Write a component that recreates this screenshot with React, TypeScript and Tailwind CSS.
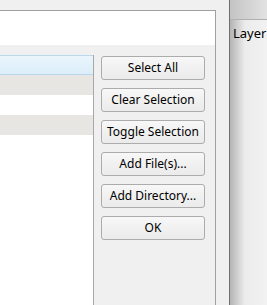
import React from 'react';

const buttons = ['Select All', 'Clear Selection', 'Toggle Selection', 'Add File(s)...', 'Add Directory...', 'OK'];

const rows = [
  'border-y border-[#b9d8ec] bg-gradient-to-b from-[#eaf5fc] to-[#dcEEFA]',
  'bg-[#e8e6e2]',
  'bg-white',
  'bg-[#e8e6e2]',
];

const App: React.FC = () => {
  return (
    <div className="flex h-[305px] w-[267px] overflow-hidden bg-[#f0f0f0] font-['Noto_Sans',sans-serif] text-[12px] text-black">
      <div className="flex w-[229px] flex-col">
        <div className="h-[10px] shrink-0" />
        <div className="flex w-[216px] flex-1 flex-col border-r border-t border-[#a0a0a0]">
          <div className="h-[34px] shrink-0 bg-white" />
          <div className="flex flex-1 pt-[10px]">
            <div className="flex w-[94px] flex-col border-r border-[#a8a8a8] bg-white">
              {rows.map((cls, i) => (
                <div key={i} className={`h-[20px] ${cls}`} />
              ))}
            </div>
            <div className="flex flex-col gap-[8px] pl-[7px] pt-px">
              {buttons.map((b) => (
                <button
                  key={b}
                  className="flex h-[24px] w-[104px] items-center justify-center rounded-[3px] border border-[#acacac] bg-gradient-to-b from-[#f7f7f7] to-[#ebebeb] leading-none"
                >
                  {b}
                </button>
              ))}
            </div>
          </div>
        </div>
      </div>
      <div className="w-px bg-[#6f6f6f]" />
      <div className="flex flex-1 flex-col bg-gradient-to-r from-[#b4b4b4] via-[#ececec] via-40% to-[#f2f2f2]">
        <div className="h-[20px] border-b border-[#b0b0b0] bg-gradient-to-r from-[#c4c4c4] to-[#e2e2e2]" />
        <div className="pl-[3px] pt-[4px] text-[13px]">Layer</div>
      </div>
    </div>
  );
};

export default App;
